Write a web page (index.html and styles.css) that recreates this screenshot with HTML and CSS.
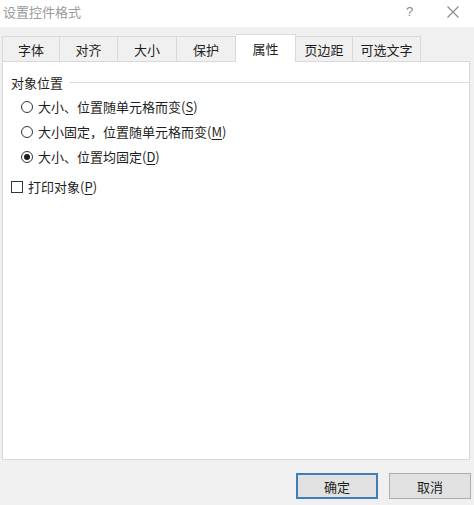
FILE: index.html
```html
<!DOCTYPE html>
<html lang="zh">
<head>
<meta charset="utf-8">
<title>设置控件格式</title>
<link rel="stylesheet" href="styles.css">
</head>
<body>
<div class="dialog">
  <div class="titlebar">
    <span class="title">设置控件格式</span>
    <span class="help">?</span>
    <span class="close">
      <svg width="12" height="12" viewBox="0 0 12 12"><path d="M0.5 0.5 L11.5 11.5 M11.5 0.5 L0.5 11.5" stroke="#8a8a8a" stroke-width="1.1" fill="none"/></svg>
    </span>
  </div>
  <div class="tabs">
    <div class="tab w58">字体</div>
    <div class="tab w58">对齐</div>
    <div class="tab w59">大小</div>
    <div class="tab w59">保护</div>
    <div class="tab active w60">属性</div>
    <div class="tab w57">页边距</div>
    <div class="tab w68">可选文字</div>
  </div>
  <div class="panel">
    <div class="group-head">
      <span class="group-label">对象位置</span>
      <span class="group-line"></span>
    </div>
    <div class="radios">
      <div class="row"><span class="radio"></span><span>大小、位置随单元格而变(<u>S</u>)</span></div>
      <div class="row"><span class="radio"></span><span>大小固定，位置随单元格而变(<u>M</u>)</span></div>
      <div class="row"><span class="radio checked"></span><span>大小、位置均固定(<u>D</u>)</span></div>
    </div>
    <div class="row check-row"><span class="checkbox"></span><span>打印对象(<u>P</u>)</span></div>
  </div>
  <div class="footer">
    <button class="btn primary">确定</button>
    <button class="btn">取消</button>
  </div>
</div>
</body>
</html>
```
FILE: styles.css
```css
html, body {
  margin: 0;
  padding: 0;
}
body {
  width: 474px;
  height: 505px;
  background: #f0f0f0;
  font-family: "Noto Sans CJK SC", "Noto Sans", sans-serif;
  font-size: 13px;
  color: #1e1e1e;
  overflow: hidden;
}
.dialog {
  width: 474px;
  height: 505px;
  display: flex;
  flex-direction: column;
}
.titlebar {
  height: 27px;
  background: #ffffff;
  display: flex;
  align-items: center;
  flex-shrink: 0;
}
.title {
  padding-left: 3px;
  color: #9a9a9a;
  font-size: 13px;
  flex: 1;
  margin-top: -4px;
}
.help {
  color: #8a8a8a;
  font-family: "Liberation Sans", sans-serif;
  font-size: 13px;
  width: 12px;
  margin-right: 29px;
  margin-top: -4px;
}
.close {
  display: flex;
  margin-right: 15px;
  margin-top: -4px;
}
.tabs {
  display: flex;
  align-items: flex-end;
  height: 27px;
  margin-top: 7px;
  padding-left: 2px;
  flex-shrink: 0;
  position: relative;
  z-index: 1;
}
.tab {
  height: 25px;
  box-sizing: border-box;
  border: 1px solid #d9d9d9;
  border-left: none;
  border-bottom: none;
  background: #f0f0f0;
  display: flex;
  align-items: center;
  justify-content: center;
  font-size: 13px;
  color: #1e1e1e;
  padding-top: 1px;
}
.tab:first-child {
  border-left: 1px solid #d9d9d9;
}
.tab.active {
  height: 28px;
  background: #ffffff;
  margin-bottom: -1px;
  padding-bottom: 2px;
}
.w57 { width: 57px; }
.w58 { width: 58px; }
.w59 { width: 59px; }
.w60 { width: 60px; }
.w68 { width: 68px; }
.panel {
  margin-left: 2px;
  width: 468px;
  height: 399px;
  box-sizing: border-box;
  background: #ffffff;
  border: 1px solid #d9d9d9;
  padding: 10px 0 0 8px;
  flex-shrink: 0;
}
.group-head {
  display: flex;
  align-items: center;
  height: 20px;
}
.group-label {
  margin-right: 6px;
}
.group-line {
  flex: 1;
  height: 1px;
  background: #dcdcdc;
}
.radios {
  padding-left: 10px;
  padding-top: 2px;
}
.row {
  display: flex;
  align-items: center;
  height: 25px;
}
.row u {
  text-decoration: underline;
  text-underline-offset: 2px;
}
.radio {
  width: 12px;
  height: 12px;
  box-sizing: border-box;
  border: 1px solid #333333;
  border-radius: 50%;
  margin-right: 5px;
  display: flex;
  align-items: center;
  justify-content: center;
}
.radio.checked::after {
  content: "";
  width: 6px;
  height: 6px;
  border-radius: 50%;
  background: #1e1e1e;
}
.check-row {
  margin-top: 5px;
}
.checkbox {
  width: 12px;
  height: 12px;
  box-sizing: border-box;
  border: 1px solid #333333;
  margin-right: 5px;
}
.footer {
  display: flex;
  justify-content: flex-end;
  gap: 11px;
  padding-top: 13px;
  padding-right: 3px;
}
.btn {
  width: 82px;
  height: 26px;
  box-sizing: border-box;
  border: 1px solid #adadad;
  background: #e1e1e1;
  font-family: "Noto Sans CJK SC", "Noto Sans", sans-serif;
  font-size: 13px;
  color: #1e1e1e;
  padding: 0;
  margin: 0;
}
.btn.primary {
  border: 2px solid #3d7fb8;
}
```
